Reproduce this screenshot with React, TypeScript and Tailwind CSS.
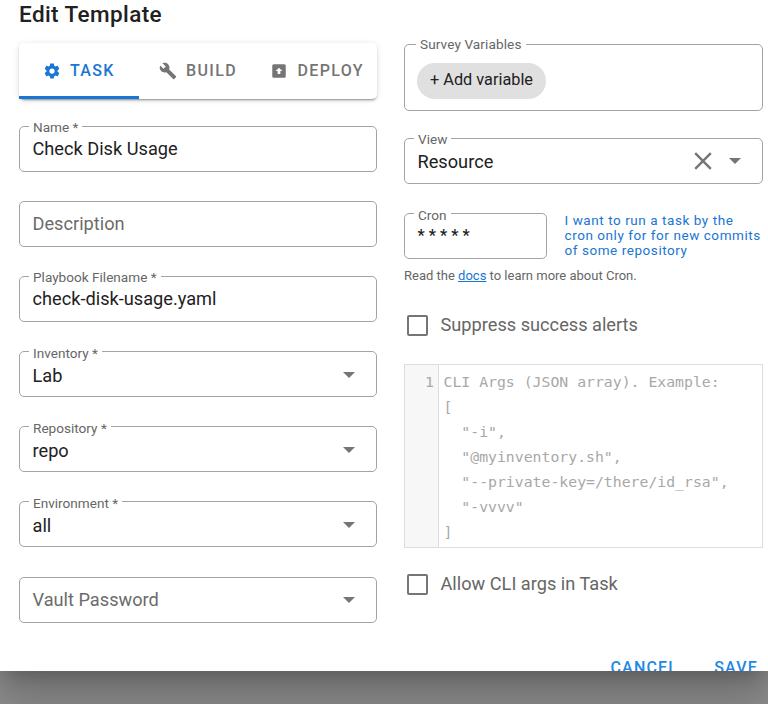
import type { ReactNode } from "react"
import clsx from "clsx"

const tabs = [
  {
    name: "Task",
    active: true,
    width: "w-[120px] pl-[23.5px]",
    path: "M12,15.5A3.5,3.5 0 0,1 8.5,12A3.5,3.5 0 0,1 12,8.5A3.5,3.5 0 0,1 15.5,12A3.5,3.5 0 0,1 12,15.5M19.43,12.97C19.47,12.65 19.5,12.33 19.5,12C19.5,11.67 19.47,11.34 19.43,11L21.54,9.37C21.73,9.22 21.78,8.95 21.66,8.73L19.66,5.27C19.54,5.05 19.27,4.96 19.05,5.05L16.56,6.05C16.04,5.66 15.5,5.32 14.87,5.07L14.5,2.42C14.46,2.18 14.25,2 14,2H10C9.75,2 9.54,2.18 9.5,2.42L9.13,5.07C8.5,5.32 7.96,5.66 7.44,6.05L4.95,5.05C4.73,4.96 4.46,5.05 4.34,5.27L2.34,8.73C2.21,8.95 2.27,9.22 2.46,9.37L4.57,11C4.53,11.34 4.5,11.67 4.5,12C4.5,12.33 4.53,12.65 4.57,12.97L2.46,14.63C2.27,14.78 2.21,15.05 2.34,15.27L4.34,18.73C4.46,18.95 4.73,19.03 4.95,18.95L7.44,17.94C7.96,18.34 8.5,18.68 9.13,18.93L9.5,21.58C9.54,21.82 9.75,22 10,22H14C14.25,22 14.46,21.82 14.5,21.58L14.87,18.93C15.5,18.67 16.04,18.34 16.56,17.94L19.05,18.95C19.27,19.03 19.54,18.95 19.66,18.73L21.66,15.27C21.78,15.05 21.73,14.78 21.54,14.63L19.43,12.97Z",
  },
  {
    name: "Build",
    active: false,
    width: "w-[113px] pl-[19.5px]",
    path: "M22.7,19L13.6,9.9C14.5,7.6 14,4.9 12.1,3C10.1,1 7.1,0.6 4.7,1.7L9,6L6,9L1.6,4.7C0.4,7.1 0.9,10.1 2.9,12.1C4.8,14 7.5,14.5 9.8,13.6L18.9,22.7C19.3,23.1 19.9,23.1 20.3,22.7L22.6,20.4C23.1,20 23.1,19.3 22.7,19Z",
  },
  {
    name: "Deploy",
    active: false,
    width: "flex-1 pl-[18px]",
    path: "M5,3H19A2,2 0 0,1 21,5V19A2,2 0 0,1 19,21H5A2,2 0 0,1 3,19V5A2,2 0 0,1 5,3M10.2,16H13.8V12H16.5L12,7.5L7.5,12H10.2Z",
  },
]

function Caret() {
  return (
    <svg viewBox="0 0 12 6" className="mt-px h-1.5 w-3 shrink-0 fill-[#757575]">
      <path d="M0 0h12L6 6z" />
    </svg>
  )
}

type FieldProps = {
  label?: string
  labelClass?: string
  className?: string
  children: ReactNode
}

function Field({ label, labelClass, className, children }: FieldProps) {
  return (
    <div className={clsx("relative flex rounded-[5px] border border-[#a3a3a3] px-[12.5px]", className)}>
      {label && (
        <span
          className={clsx(
            "absolute bg-white px-1 text-[13.6px] leading-[18px] whitespace-nowrap text-[#666]",
            labelClass ?? "-top-[8.5px] left-[9px]"
          )}
        >
          {label}
        </span>
      )}
      {children}
    </div>
  )
}

function TextField({ label, value }: { label: string; value?: string }) {
  return (
    <Field label={value ? label : undefined} className="h-[46px] pt-2.5">
      <span className={clsx("text-[18.2px] leading-6", value ? "text-[#212121]" : "text-[#6b6b6b]")}>{value ?? label}</span>
    </Field>
  )
}

function SelectField({ label, value }: { label: string; value?: string }) {
  return (
    <Field label={value ? label : undefined} className="h-[46px] items-center justify-between pr-[21px]">
      <span className={clsx("text-[18.2px] leading-6", value ? "pt-[3px] text-[#212121]" : "text-[#6b6b6b]")}>
        {value ?? label}
      </span>
      <Caret />
    </Field>
  )
}

function Checkbox({ label }: { label: string }) {
  return (
    <label className="flex h-6 items-center gap-[12.5px] pl-[3px] text-[18.2px] text-[#666]">
      <span className="h-[21px] w-[21px] rounded-xs border-2 border-[#757575]" />
      {label}
    </label>
  )
}

const placeholder = `CLI Args (JSON array). Example:
[
  "-i",
  "@myinventory.sh",
  "--private-key=/there/id_rsa",
  "-vvvv"
]`

export default function App() {
  return (
    <div className="h-[704px] w-[768px] overflow-hidden bg-[#8f8f8f] font-['Roboto',sans-serif]">
      <div className="flex h-[671px] flex-col overflow-hidden bg-white shadow-[0_12px_17px_-8px_rgba(0,0,0,0.2),0_27px_43px_3px_rgba(0,0,0,0.14),0_10px_52px_9px_rgba(0,0,0,0.12)]">
        <h1 className="h-[43px] shrink-0 pl-[19px] text-[22.5px] leading-7 font-medium tracking-[0.4px] text-[#212121]">
          Edit Template
        </h1>

        <div className="flex h-[580px] shrink-0 gap-[27px] pr-[5px] pl-[19px]">
          {/* Left column */}
          <div className="flex w-[358px] flex-col">
            <div className="flex h-14 shrink-0 rounded-[5px] shadow-[0_3px_1px_-2px_rgba(0,0,0,0.2),0_2px_2px_rgba(0,0,0,0.14),0_1px_6px_rgba(0,0,0,0.12)]">
              {tabs.map((tab) => (
                <button
                  key={tab.name}
                  className={clsx(
                    "flex items-center gap-[9.5px] border-b-[3px] pt-[3px] text-[16px] font-medium tracking-[1.35px] uppercase",
                    tab.width,
                    tab.active ? "border-[#1976d2] text-[#1976d2]" : "border-transparent text-[#757575]"
                  )}
                >
                  <svg viewBox="0 0 24 24" className="h-[18px] w-[18px] shrink-0 fill-current" fillRule="evenodd">
                    <path d={tab.path} />
                  </svg>
                  {tab.name}
                </button>
              ))}
            </div>

            <div className="mt-[26.5px] flex flex-col gap-[29.2px]">
              <TextField label="Name *" value="Check Disk Usage" />
              <TextField label="Description" />
              <TextField label="Playbook Filename *" value="check-disk-usage.yaml" />
              <SelectField label="Inventory *" value="Lab" />
              <SelectField label="Repository *" value="repo" />
              <SelectField label="Environment *" value="all" />
              <SelectField label="Vault Password" />
            </div>
          </div>

          {/* Right column */}
          <div className="flex w-[359px] flex-col pt-px">
            <Field
              label="Survey Variables"
              labelClass="-top-2.5 left-[11px] tracking-[0.1px]"
              className="h-[67px] shrink-0 items-center pt-1.5 pl-3"
            >
              <span className="flex h-9 items-center rounded-full bg-[#e0e0e0] px-[13px] text-[16.3px] text-[#212121]">
                + Add variable
              </span>
            </Field>

            <Field label="View" className="mt-[26.5px] h-[46px] shrink-0 items-center justify-between pr-[21px]">
              <span className="pt-[3px] text-[18.2px] leading-6 text-[#212121]">Resource</span>
              <span className="flex items-center gap-[17px]">
                <svg viewBox="0 0 18 18" className="h-[18px] w-[18px] stroke-[#757575]" fill="none" strokeWidth="2.4">
                  <path d="M1.2 1.2l15.6 15.6M16.8 1.2L1.2 16.8" />
                </svg>
                <Caret />
              </span>
            </Field>

            <div className="mt-[29.5px] flex gap-[18px]">
              <Field label="Cron" className="h-[46px] w-[142.5px] shrink-0 pt-2.5">
                <span className="text-[16.3px] leading-6 font-medium text-[#212121]">* * * * *</span>
              </Field>
              <a className="text-[13.5px] leading-[15.2px] tracking-[0.56px] whitespace-nowrap text-[#1976d2]">
                I want to run a task by the
                <br />
                cron only for for new commits
                <br />
                of some repository
              </a>
            </div>
            <p className="mt-[9px] text-[13px] leading-4 text-[#666]">
              Read the <a className="text-[#1976d2] underline">docs</a> to learn more about Cron.
            </p>

            <div className="mt-[29px]">
              <Checkbox label="Suppress success alerts" />
            </div>

            <div className="mt-[27px] flex h-[184px] shrink-0 border border-[#ddd] font-['DejaVu_Sans_Mono',monospace] text-[14.8px] leading-[25px] text-[#a8a8a8]">
              <div className="w-[34px] border-r border-[#ddd] bg-[#f7f7f7] pt-1 pr-1 text-right">1</div>
              <pre className="pt-1 pl-[4.5px] font-[inherit]">{placeholder}</pre>
            </div>

            <div className="mt-6">
              <Checkbox label="Allow CLI args in Task" />
            </div>
          </div>
        </div>

        <div className="mt-[35px] flex shrink-0 justify-end gap-9 pr-2.5 text-[16px] leading-5 font-medium tracking-[1.2px] text-[#1e88e5] uppercase">
          <span>Cancel</span>
          <span>Save</span>
        </div>
      </div>
    </div>
  )
}
